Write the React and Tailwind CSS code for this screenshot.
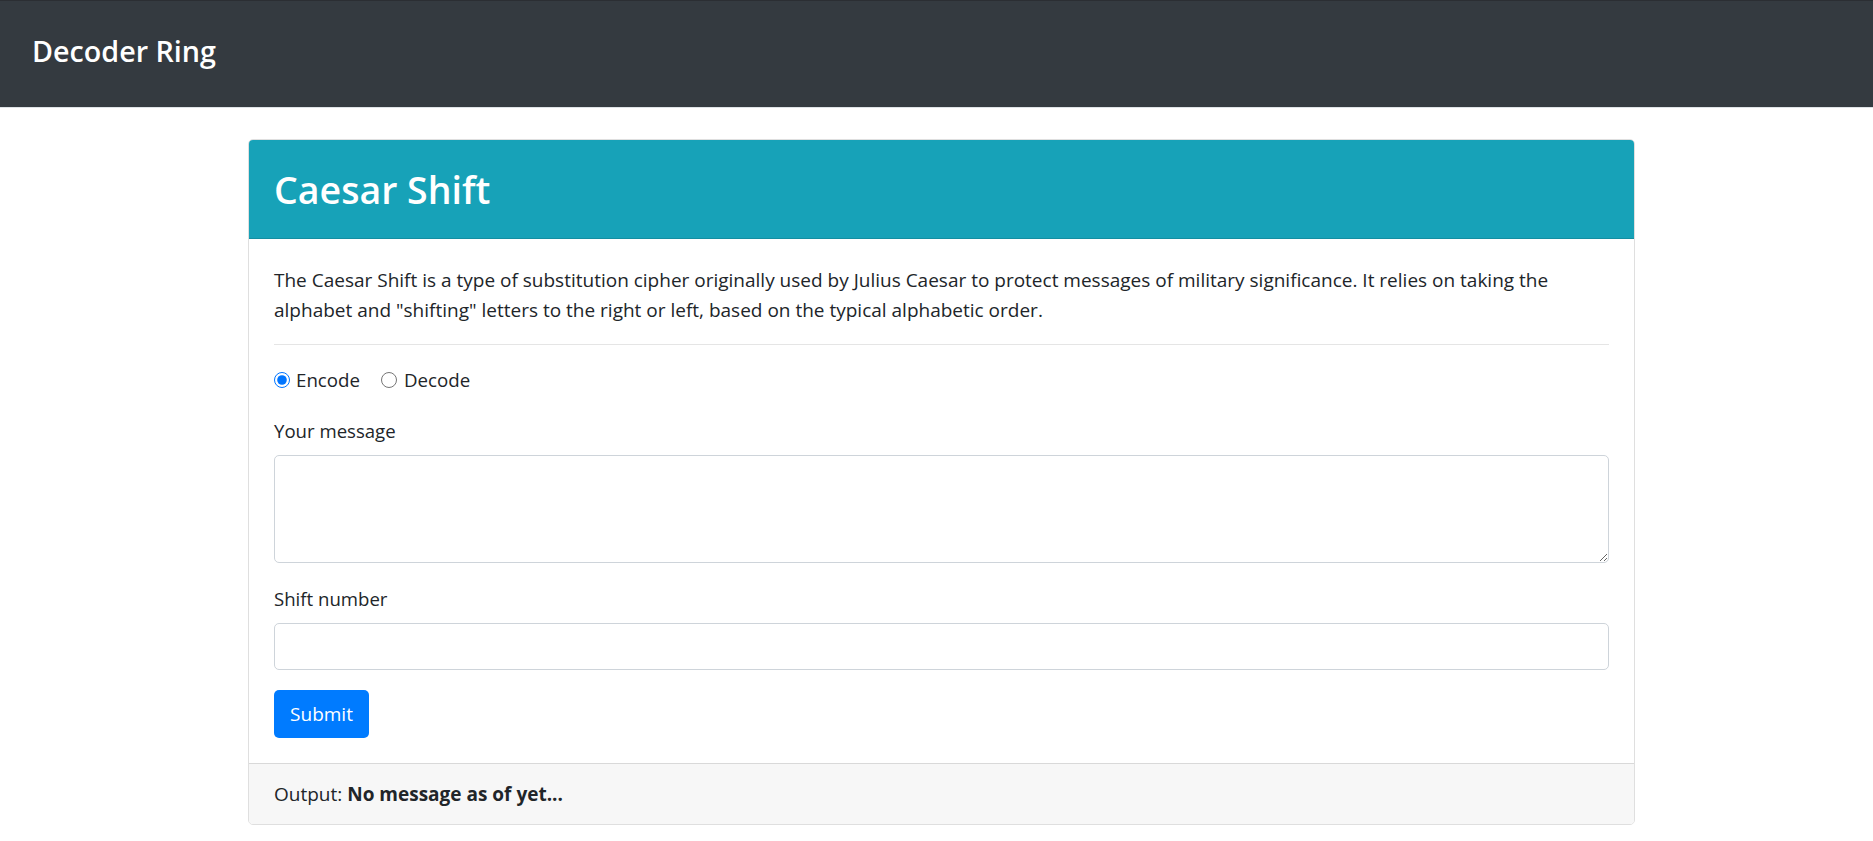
function App() {
  return (
    <div className="min-h-screen bg-white text-[#212529] font-['Open_Sans','Noto_Sans',sans-serif] text-[19px] leading-[30px]">
      <nav className="h-[108px] bg-[#343a40] border-t border-b border-t-[#2b2e33] border-b-[#dee2e6] flex items-center px-[32px] pb-[6px]">
        <a className="text-white text-[28.7px] font-semibold">Decoder Ring</a>
      </nav>
      <div className="pl-[248px] pr-[238px] pt-[31px] pb-[17px]">
        <div className="border border-[#dfdfdf] rounded-[5px] overflow-hidden">
          <div className="bg-[#17a2b8] h-[99px] border-b border-[#148ea1] flex items-center px-[25px] pt-[2px]">
            <h3 className="text-white text-[37.5px] font-semibold">Caesar Shift</h3>
          </div>
          <div className="px-[25px] pt-[26px] pb-[25px]">
            <p>
              The Caesar Shift is a type of substitution cipher originally used by Julius Caesar to protect messages of military significance. It relies on taking the alphabet and "shifting" letters to the right or left, based on the typical alphabetic order.
            </p>
            <hr className="border-[#e5e5e5] mt-[19px] mb-[20px]" />
            <div className="flex items-center h-[30px] text-[18.7px]">
              <label className="flex items-center mr-[21px]">
                <input type="radio" name="mode" defaultChecked className="w-[16px] h-[16px] mr-[6px]" />
                Encode
              </label>
              <label className="flex items-center">
                <input type="radio" name="mode" className="w-[16px] h-[16px] mr-[7px]" />
                Decode
              </label>
            </div>
            <label className="block mt-[21px] mb-[9px] text-[18.6px]">Your message</label>
            <textarea className="block w-full h-[108px] border border-[#ced4da] rounded-[5px]" />
            <label className="block mt-[21px] mb-[9px] text-[18.6px]">Shift number</label>
            <input type="text" className="block w-full h-[47px] border border-[#ced4da] rounded-[5px]" />
            <button className="mt-[20px] w-[95px] h-[48px] bg-[#007bff] text-white rounded-[5px]">Submit</button>
          </div>
          <div className="bg-[#f7f7f7] border-t border-[#d9d9d9] h-[61px] flex items-center px-[25px]">
            <span>Output: <strong className="font-bold">No message as of yet...</strong></span>
          </div>
        </div>
      </div>
    </div>
  )
}

export default App
